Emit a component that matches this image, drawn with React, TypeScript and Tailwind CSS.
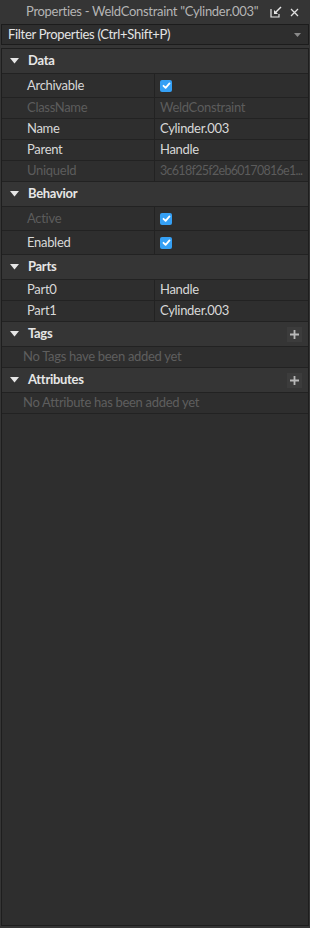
import React from "react";

type Row =
  | { kind: "text"; name: string; value: string; dim?: boolean; tight?: boolean }
  | { kind: "check"; name: string; dim?: boolean };

const sections: { title: string; rows: Row[]; add?: boolean; empty?: string }[] = [
  {
    title: "Data",
    rows: [
      { kind: "check", name: "Archivable" },
      { kind: "text", name: "ClassName", value: "WeldConstraint", dim: true },
      { kind: "text", name: "Name", value: "Cylinder.003" },
      { kind: "text", name: "Parent", value: "Handle" },
      { kind: "text", name: "UniqueId", value: "3c618f25f2eb60170816e1...", dim: true, tight: true },
    ],
  },
  {
    title: "Behavior",
    rows: [
      { kind: "check", name: "Active", dim: true },
      { kind: "check", name: "Enabled" },
    ],
  },
  {
    title: "Parts",
    rows: [
      { kind: "text", name: "Part0", value: "Handle" },
      { kind: "text", name: "Part1", value: "Cylinder.003" },
    ],
  },
  { title: "Tags", rows: [], add: true, empty: "No Tags have been added yet" },
  { title: "Attributes", rows: [], add: true, empty: "No Attribute has been added yet" },
];

const Check = () => (
  <span className="w-[12px] h-[12px] rounded-[2px] bg-[#35a0f5] flex items-center justify-center">
    <svg width="9" height="9" viewBox="0 0 9 9">
      <path d="M1.5 4.8 L3.6 6.8 L7.5 2.4" stroke="#fff" strokeWidth="1.8" fill="none" strokeLinecap="round" strokeLinejoin="round" />
    </svg>
  </span>
);

const Caret = () => (
  <svg width="9" height="6" viewBox="0 0 9 6" className="ml-[8px] mr-[9px] shrink-0">
    <path d="M0 0 H9 L4.5 5.5 Z" fill="#e6e6e6" />
  </svg>
);

export default function App() {
  return (
    <div
      className="w-[310px] h-[928px] bg-[#353535] flex flex-col text-[13px] tracking-[-0.3px]"
      style={{ fontFamily: "Lato, 'Open Sans', sans-serif" }}
    >
      {/* title bar */}
      <div className="h-[24px] flex items-center pl-[26px] pr-[11px] text-[#b4b4b4]">
        <span className="flex-1 whitespace-nowrap">Properties - WeldConstraint "Cylinder.003"</span>
        <svg width="12" height="12" viewBox="0 0 12 12" className="mr-[8px] shrink-0">
          <path d="M1 3 V11 H9 V8" stroke="#e8e8e8" strokeWidth="1.2" fill="none" />
          <path d="M11 1 L5.5 6.5" stroke="#e8e8e8" strokeWidth="1.4" />
          <path d="M4 4 V8 H8 Z" fill="#e8e8e8" />
        </svg>
        <svg width="9" height="9" viewBox="0 0 9 9" className="shrink-0">
          <path d="M1 1 L8 8 M8 1 L1 8" stroke="#e0e0e0" strokeWidth="1.3" />
        </svg>
      </div>

      {/* filter */}
      <div className="mx-[1px] h-[21px] border border-[#1c1c1c] bg-[#2e2e2e] flex items-center pl-[6px] pr-[7px] text-[#e4e4e4]">
        <span className="flex-1">Filter Properties (Ctrl+Shift+P)</span>
        <svg width="7" height="4" viewBox="0 0 7 4">
          <path d="M0 0 H7 L3.5 4 Z" fill="#8a8a8a" />
        </svg>
      </div>

      {/* properties list */}
      <div className="mt-[3px] mx-[1px] mb-[2px] flex-1 border border-[#1e1e1e] bg-[#2e2e2e]">
        {sections.map((s) => (
          <div key={s.title}>
            <div className="h-[25px] flex items-center bg-[#353535] border-b border-[#222222] pr-[6px]">
              <Caret />
              <span className="flex-1 font-bold text-[#e6e6e6]">{s.title}</span>
              {s.add && (
                <span className="w-[15px] h-[15px] bg-[#3c3c3c] flex items-center justify-center">
                  <svg width="9" height="9" viewBox="0 0 9 9">
                    <path d="M4.5 0 V9 M0 4.5 H9" stroke="#b8b8b8" strokeWidth="1.8" />
                  </svg>
                </span>
              )}
            </div>
            {s.rows.map((r) => (
              <div
                key={r.name}
                className={`flex border-b border-[#222222] ${r.kind === "check" ? "h-[24px]" : "h-[21px]"}`}
              >
                <div
                  className={`w-[153px] shrink-0 border-r border-[#222222] pl-[25px] flex items-center ${
                    r.dim ? "text-[#5c5c5c]" : "text-[#d8d8d8]"
                  }`}
                >
                  {r.name}
                </div>
                <div className="flex-1 pl-[5px] flex items-center min-w-0">
                  {r.kind === "check" ? (
                    <Check />
                  ) : (
                    <span
                      className={`whitespace-nowrap ${r.tight ? "tracking-[-0.7px] text-[12.5px]" : ""} ${
                        r.dim ? "text-[#5c5c5c]" : "text-[#d8d8d8]"
                      }`}
                    >
                      {r.value}
                    </span>
                  )}
                </div>
              </div>
            ))}
            {s.empty && (
              <div className="h-[21px] flex items-center pl-[21px] border-b border-[#222222] text-[#5e5e5e]">
                {s.empty}
              </div>
            )}
          </div>
        ))}
      </div>
    </div>
  );
}
